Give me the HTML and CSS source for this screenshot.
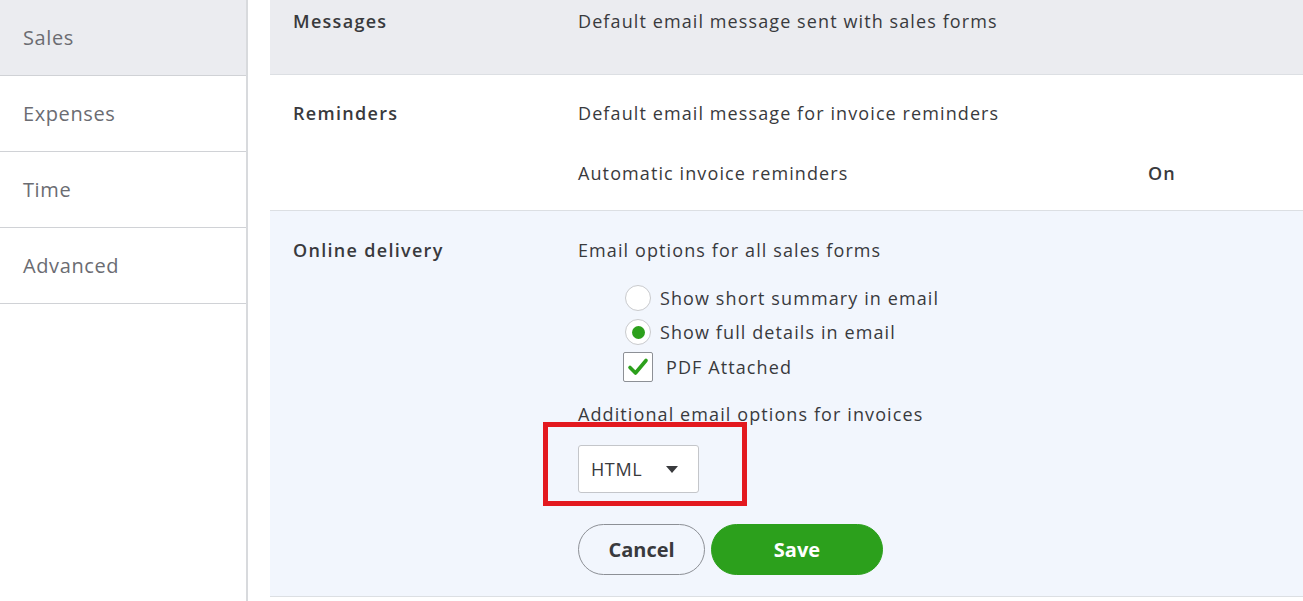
FILE: index.html
```html
<!DOCTYPE html>
<html>
<head>
<meta charset="utf-8">
<link rel="stylesheet" href="styles.css">
</head>
<body>
<div class="page">
  <nav class="sidebar">
    <div class="nav-item active">Sales</div>
    <div class="nav-item">Expenses</div>
    <div class="nav-item">Time</div>
    <div class="nav-item">Advanced</div>
  </nav>
  <main class="content">
    <section class="section messages">
      <div class="sec-label">Messages</div>
      <div class="sec-body">
        <div class="line">Default email message sent with sales forms</div>
      </div>
    </section>
    <section class="section reminders">
      <div class="sec-label">Reminders</div>
      <div class="sec-body">
        <div class="line">Default email message for invoice reminders</div>
        <div class="line setting">
          <span>Automatic invoice reminders</span>
          <span class="value">On</span>
        </div>
      </div>
    </section>
    <section class="section delivery">
      <div class="sec-label">Online delivery</div>
      <div class="sec-body">
        <div class="line">Email options for all sales forms</div>
        <div class="options">
          <label class="opt"><span class="radio"></span><span>Show short summary in email</span></label>
          <label class="opt"><span class="radio checked"><span class="dot"></span></span><span>Show full details in email</span></label>
          <label class="opt chk"><span class="checkbox"><svg width="22" height="20" viewBox="0 0 22 20"><path d="M3 10.5 L8.5 16 L19 3.5" fill="none" stroke="#2ca01c" stroke-width="3.6" stroke-linecap="round" stroke-linejoin="round"/></svg></span><span>PDF Attached</span></label>
        </div>
        <div class="line additional">Additional email options for invoices</div>
        <div class="dropdown-wrap">
          <div class="dropdown"><span>HTML</span><svg width="12" height="7" viewBox="0 0 12 7"><path d="M0 0 H12 L6 7 Z" fill="#393a3d"/></svg></div>
          <div class="highlight"></div>
        </div>
        <div class="actions">
          <button class="btn btn-cancel">Cancel</button>
          <button class="btn btn-save">Save</button>
        </div>
      </div>
    </section>
  </main>
</div>
</body>
</html>
```
FILE: styles.css
```css
* { box-sizing: border-box; }
html, body { margin: 0; padding: 0; background: #fff; }
body {
  font-family: "Open Sans", "Liberation Sans", sans-serif;
  color: #393a3d;
  font-size: 18px;
  letter-spacing: 1.1px;
  width: 1303px;
  height: 601px;
  overflow: hidden;
}
.page { display: flex; height: 601px; }
.sidebar {
  width: 248px;
  flex: none;
  border-right: 2px solid #d8dadd;
}
.nav-item {
  height: 76px;
  border-bottom: 1px solid #d0d2d6;
  padding-left: 23px;
  display: flex;
  align-items: center;
  font-size: 20px;
  letter-spacing: 0.6px;
  color: #6b6c72;
  padding-bottom: 1px;
}
.nav-item.active { background: #ebecf0; }
.content { flex: 1; margin-left: 22px; display: flex; flex-direction: column; }
.section {
  display: grid;
  grid-template-columns: 285px 1fr;
  padding-left: 23px;
  border-bottom: 1px solid #dcdfe3;
}
.sec-label { font-weight: 600; line-height: 24px; letter-spacing: 1.3px; }
.line { line-height: 24px; }
.messages { background: #ebecf0; height: 75px; padding-top: 9px; }
.reminders { background: #fff; height: 136px; padding-top: 26px; }
.reminders .setting { display: grid; grid-template-columns: 570px auto; margin-top: 36px; }
.reminders .value { font-weight: 600; }
.delivery { background: #f2f6fd; height: 386px; padding-top: 27px; }
.options { margin-top: 19px; padding-left: 47px; display: flex; flex-direction: column; }
.opt { display: flex; align-items: center; height: 34px; }
.radio {
  width: 26px; height: 26px; border-radius: 50%;
  border: 1px solid #c9cacd; background: #fff;
  display: flex; align-items: center; justify-content: center;
  margin-right: 9px; flex: none;
}
.dot { width: 13px; height: 13px; border-radius: 50%; background: #2ca01c; }
.chk { height: 36px; }
.checkbox {
  width: 30px; height: 30px; border: 1px solid #8d9096; border-radius: 2px;
  background: #fff; display: flex; align-items: center; justify-content: center;
  margin-left: -2px; margin-right: 13px; flex: none;
}
.additional { margin-top: 17px; }
.dropdown-wrap { position: relative; width: 121px; margin-top: 19px; }
.dropdown {
  width: 121px; height: 48px; background: #fff; border: 1px solid #c4c6ca; border-radius: 3px;
  display: flex; align-items: center; justify-content: space-between; padding: 0 20px 0 12px;
  letter-spacing: 0.6px;
}
.highlight {
  position: absolute; left: -35px; top: -23px; width: 204px; height: 84px;
  border: 5px solid #e3191f;
}
.actions { display: flex; gap: 6px; margin-top: 31px; }
.btn {
  height: 51px; border-radius: 26px; font-family: inherit; font-size: 20px; font-weight: 700;
  letter-spacing: 0;
}
.btn-cancel { width: 127px; background: transparent; border: 1px solid #8d9096; color: #393a3d; }
.btn-save { width: 172px; background: #2ca01c; border: 1px solid #2ca01c; color: #fff; }
```
